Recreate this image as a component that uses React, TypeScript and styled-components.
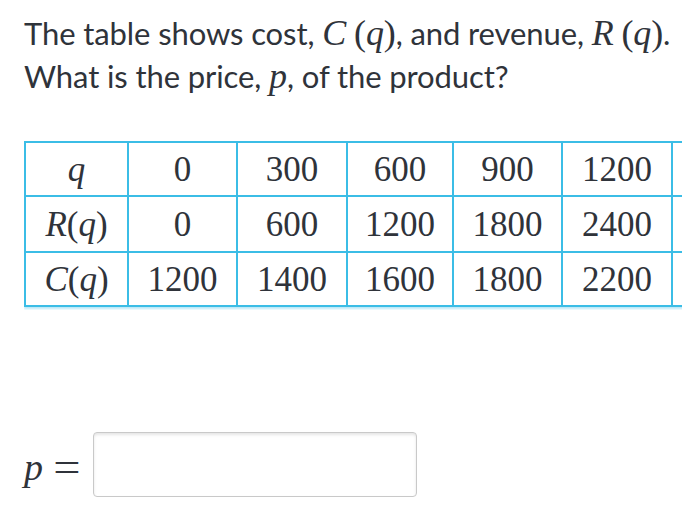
import React from 'react';
import styled, { createGlobalStyle } from 'styled-components';

const GlobalStyle = createGlobalStyle`
    html, body {
        margin: 0;
        padding: 0;
        background: #ffffff;
    }
    body {
        width: 700px;
        height: 518px;
        overflow: hidden;
    }
`

const Page = styled.div`
    display: flex;
    flex-direction: column;
    padding: 12px 0 0 24px;
    color: #2f333a;
`
const Question = styled.p`
    margin: 0;
    font-family: Lato, "Noto Sans", sans-serif;
    font-size: 31px;
    line-height: 43px;
    letter-spacing: -0.1px;
`
const MathVar = styled.span`
    font-family: "Liberation Serif", "DejaVu Serif", serif;
    font-style: italic;
    font-size: 36px;
`
const MathParen = styled.span`
    font-family: "Liberation Serif", "DejaVu Serif", serif;
    font-size: 36px;
`
const TableClip = styled.div`
    width: 658px;
    overflow: hidden;
    margin-top: 43px;
    padding-bottom: 3px;
`
const DataTable = styled.table`
    border-collapse: collapse;
    table-layout: fixed;
    width: 697px;
    font-family: "Liberation Serif", "DejaVu Serif", serif;
    font-size: 35px;
    color: #2f333a;
    box-shadow: 0 2px 2px rgba(59, 189, 232, 0.35);
`
const Cell = styled.td<{ $w: number; $h: number }>`
    width: ${p => p.$w}px;
    height: ${p => p.$h}px;
    padding: 0;
    border: 2px solid #3bbde6;
    text-align: center;
    vertical-align: middle;
    line-height: 1;
`
const Italic = styled.span`
    font-style: italic;
`
const AnswerRow = styled.div`
    display: flex;
    align-items: center;
    margin-top: 122px;
`
const AnswerLabel = styled.span`
    display: flex;
    align-items: center;
    width: 69px;
    font-family: "Liberation Serif", "DejaVu Serif", serif;
    padding-top: 4px;
`
const LabelVar = styled.i`
    font-size: 38px;
    margin-right: 12px;
`
const Equals = styled.span`
    font-size: 42px;
    transform: scaleX(1.15);
`
const AnswerInput = styled.input`
    width: 324px;
    height: 65px;
    box-sizing: border-box;
    border: 1.5px solid #c9c9c9;
    border-radius: 4px;
    box-shadow: inset 0 2px 3px rgba(0, 0, 0, 0.1);
    outline: none;
    font-size: 24px;
`

const widths = [101, 107, 108, 104, 107, 108, 60];
const rowHeights = [52, 54, 52];

const rows: React.ReactNode[][] = [
    [<Italic>q</Italic>, '0', '300', '600', '900', '1200', ''],
    [<><Italic>R</Italic>(<Italic>q</Italic>)</>, '0', '600', '1200', '1800', '2400', ''],
    [<><Italic>C</Italic>(<Italic>q</Italic>)</>, '1200', '1400', '1600', '1800', '2200', ''],
];

const App: React.FC = () => {
    return (
        <>
            <GlobalStyle />
            <Page>
                <Question>
                    The table shows cost, <MathVar>C</MathVar> <MathParen>(</MathParen><MathVar>q</MathVar><MathParen>)</MathParen>, and revenue, <MathVar>R</MathVar> <MathParen>(</MathParen><MathVar>q</MathVar><MathParen>)</MathParen>.
                    <br />
                    What is the price, <MathVar>p</MathVar>, of the product?
                </Question>
                <TableClip>
                    <DataTable>
                        <tbody>
                            {rows.map((row, r) => (
                                <tr key={r}>
                                    {row.map((cell, c) => (
                                        <Cell key={c} $w={widths[c]} $h={rowHeights[r]}>{cell}</Cell>
                                    ))}
                                </tr>
                            ))}
                        </tbody>
                    </DataTable>
                </TableClip>
                <AnswerRow>
                    <AnswerLabel><LabelVar>p</LabelVar><Equals>=</Equals></AnswerLabel>
                    <AnswerInput type="text" aria-label="p" />
                </AnswerRow>
            </Page>
        </>
    );
}

export default App;
